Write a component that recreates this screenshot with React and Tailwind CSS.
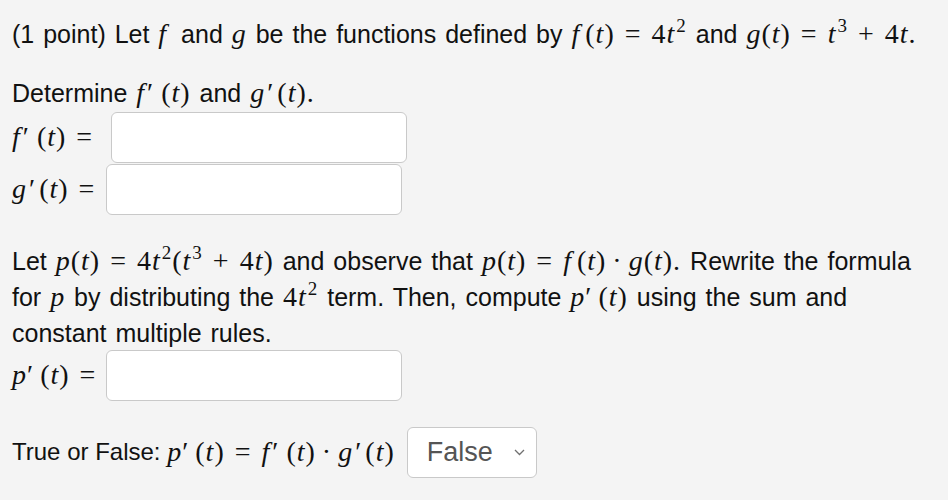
import React from 'react';

// ── Pequeños ayudantes para la notación matemática ─────────────────────────
const M = ({ children }) => (
  <span className="font-['Liberation_Serif',serif] text-[28px] leading-none tracking-[1px] whitespace-nowrap [word-spacing:0px]">{children}</span>
);
const I = ({ children }) => <i>{children}</i>;
const F = () => <i className="mr-[5px]">f</i>;
const Op = ({ c }) => <span className="mx-[10px]">{c}</span>;
const Dot = () => <span className="mx-[6px]">·</span>;
const Sup = ({ children }) => <sup className="ml-[1px] text-[19px] -top-[11px]">{children}</sup>;
// primas: cada letra deja un hueco distinto, como en MathJax
const Pf = () => <span className="ml-[2px] mr-[7px]">′</span>;
const Pg = () => <span className="ml-[2px] mr-[3px]">′</span>;
const Pp = () => <span className="mr-[6px]">′</span>;

const AnswerBox = ({ className = '' }) => (
  <input
    type="text"
    className={`h-[51px] rounded-[6px] border border-[#c9c9c9] bg-white px-2 outline-none ${className}`}
  />
);

export default function App() {
  return (
    <div className="min-h-screen w-full bg-[#f4f4f4] font-['Liberation_Sans',Arial,sans-serif] text-[25px] text-[#111] [word-spacing:2px]">
      <div className="px-3 pt-[16px] whitespace-nowrap">

        {/* Enunciado */}
        <p className="leading-[36px]">
          (1 point) Let <M><F /></M>&nbsp;and <M><I>g</I></M> be the functions defined by{' '}
          <M>
            <F />(<I>t</I>)<Op c="=" />4<I>t</I><Sup>2</Sup>
          </M>{' '}
          and{' '}
          <M>
            <I>g</I>(<I>t</I>)<Op c="=" /><I>t</I><Sup>3</Sup><Op c="+" />4<I>t</I>.
          </M>
        </p>

        <p className="mt-[24px] leading-[35px]">
          Determine <M><I>f</I><Pf />(<I>t</I>)</M> and <M><I>g</I><Pg />(<I>t</I>).</M>
        </p>

        {/* f'(t) */}
        <div className="flex h-[52px] items-center">
          <M><I>f</I><Pf />(<I>t</I>)<Op c="=" /></M>
          <AnswerBox className="ml-[8px] w-[296px]" />
        </div>

        {/* g'(t) */}
        <div className="flex h-[52px] items-center">
          <M><I>g</I><Pg />(<I>t</I>)<Op c="=" /></M>
          <AnswerBox className="ml-[1px] w-[296px]" />
        </div>

        {/* Segunda parte */}
        <p className="mt-[28px] leading-[36px]">
          Let{' '}
          <M>
            <I>p</I>(<I>t</I>)<Op c="=" />4<I>t</I><Sup>2</Sup>(<I>t</I><Sup>3</Sup><Op c="+" />4<I>t</I>)
          </M>{' '}
          and observe that{' '}
          <M>
            <I>p</I>(<I>t</I>)<Op c="=" /><F />(<I>t</I>)<Dot /><I>g</I>(<I>t</I>).
          </M>{' '}
          Rewrite the formula
          <br />
          for <M><I>p</I></M> by distributing the <M>4<I>t</I><Sup>2</Sup></M> term. Then, compute{' '}
          <M><I>p</I><Pp />(<I>t</I>)</M> using the sum and
          <br />
          constant multiple rules.
        </p>

        {/* p'(t) */}
        <div className="-mt-[2px] flex h-[52px] items-center">
          <M><I>p</I><Pp />(<I>t</I>)<Op c="=" /></M>
          <AnswerBox className="w-[296px]" />
        </div>

        {/* Verdadero o falso */}
        <div className="mt-[25px] flex h-[52px] items-center">
          <span className="text-[24px] [word-spacing:0px]">True or False:&nbsp;</span>
          <M>
            <I>p</I><Pp />(<I>t</I>)<Op c="=" /><I>f</I><Pf />(<I>t</I>)<Dot /><I>g</I><Pg />(<I>t</I>)
          </M>
          <div className="relative ml-[12px]">
            <select
              defaultValue="False"
              className="h-[51px] w-[130px] appearance-none rounded-[6px] border border-[#c9c9c9] bg-white pl-[19px] text-[27px] text-[#555] outline-none"
            >
              <option value="?">?</option>
              <option value="True">True</option>
              <option value="False">False</option>
            </select>
            <svg
              className="pointer-events-none absolute right-[12px] top-[22px]"
              width="11"
              height="7"
              viewBox="0 0 11 7"
              fill="none"
            >
              <path d="M1 1l4.5 4.5L10 1" stroke="#707070" strokeWidth="1.3" />
            </svg>
          </div>
        </div>

      </div>
    </div>
  );
}
